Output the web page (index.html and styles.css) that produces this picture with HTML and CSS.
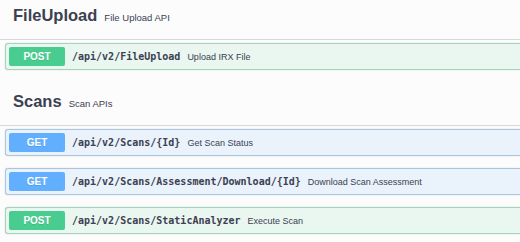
FILE: index.html
```html
<!DOCTYPE html>
<html>
<head>
<meta charset="utf-8">
<link rel="stylesheet" href="styles.css">
</head>
<body>
<div class="wrap">
  <section class="tag-section">
    <h3 class="tag first"><span class="tag-name">FileUpload</span><small class="tag-desc">File Upload API</small></h3>
    <div class="ops">
      <div class="op post">
        <span class="method">POST</span>
        <span class="path">/api/v2/FileUpload</span>
        <span class="desc">Upload IRX File</span>
      </div>
    </div>
  </section>
  <section class="tag-section">
    <h3 class="tag"><span class="tag-name">Scans</span><small class="tag-desc">Scan APIs</small></h3>
    <div class="ops">
      <div class="op get">
        <span class="method">GET</span>
        <span class="path">/api/v2/Scans/{Id}</span>
        <span class="desc">Get Scan Status</span>
      </div>
      <div class="op get">
        <span class="method">GET</span>
        <span class="path">/api/v2/Scans/Assessment/Download/{Id}</span>
        <span class="desc">Download Scan Assessment</span>
      </div>
      <div class="op post">
        <span class="method">POST</span>
        <span class="path">/api/v2/Scans/StaticAnalyzer</span>
        <span class="desc">Execute Scan</span>
      </div>
    </div>
  </section>
</div>
</body>
</html>
```

FILE: styles.css
```css
html, body {
  margin: 0;
  padding: 0;
  background: #fcfcfc;
  overflow: hidden;
}
body {
  font-family: "Liberation Sans", Arial, sans-serif;
  color: #3b4151;
}
.wrap {
  width: 520px;
}
.tag {
  display: flex;
  align-items: baseline;
  margin: 0;
  padding: 9px 0 11px 13px;
  line-height: 20px;
  border-bottom: 1px solid #d6d8db;
}
.tag.first {
  padding-top: 5px;
}
.tag-name {
  font-size: 16.5px;
  font-weight: bold;
}
.tag-desc {
  font-size: 9.5px;
  font-weight: normal;
  margin-left: 7px;
}
.ops {
  display: flex;
  flex-direction: column;
  gap: 12px;
  padding: 3px 0 12px 5px;
}
.op {
  display: flex;
  align-items: center;
  padding: 3px;
  border-radius: 3px 0 0 3px;
  box-shadow: 0 0 2px rgba(0, 0, 0, 0.12);
}
.op.post {
  background: #eaf6f0;
  border: 1px solid #a3d4bc;
  border-right: 0;
}
.op.get {
  background: #eaf2fb;
  border: 1px solid #a8c6e2;
  border-right: 0;
}
.method {
  flex: none;
  width: 56px;
  height: 19px;
  line-height: 19px;
  text-align: center;
  border-radius: 2px;
  color: #fff;
  font-size: 10px;
  font-weight: bold;
  text-shadow: 0 1px 0 rgba(0, 0, 0, 0.1);
}
.post .method {
  background: #49cc90;
}
.get .method {
  background: #61affe;
}
.path {
  font-family: "DejaVu Sans Mono", "Liberation Mono", monospace;
  font-weight: bold;
  font-size: 10px;
  margin: 0 7px 0 7px;
  color: #3b4151;
}
.desc {
  font-size: 9px;
  color: #3b4151;
}
```
